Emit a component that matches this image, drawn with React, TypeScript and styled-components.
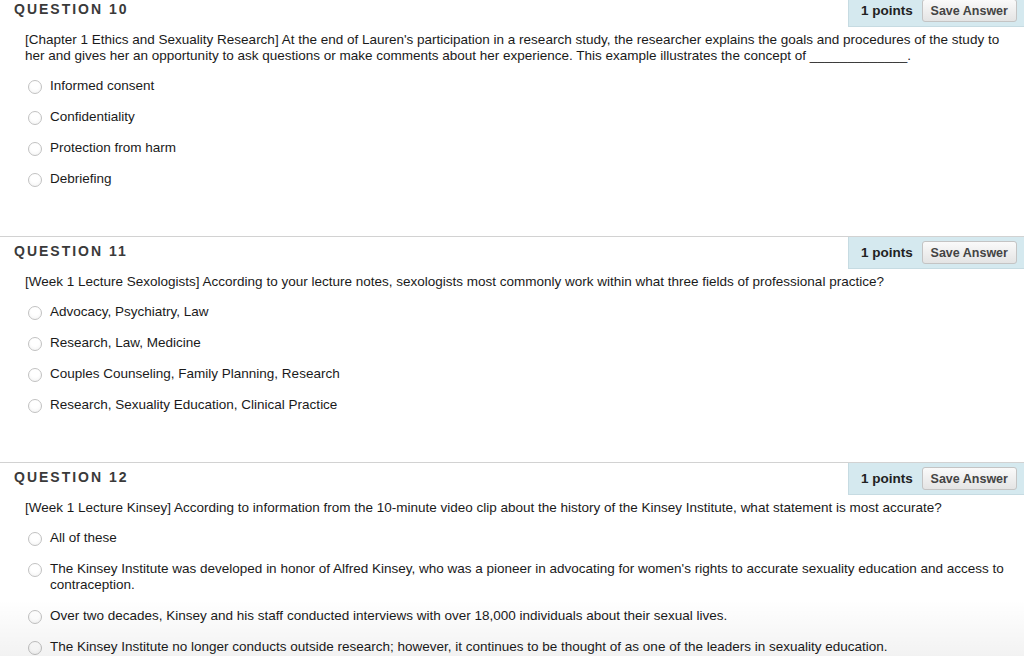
import React from "react";
import styled, { createGlobalStyle } from "styled-components";

const GlobalStyle = createGlobalStyle`
  html, body {
    margin: 0;
    padding: 0;
    background: #fff;
    font-family: "Liberation Sans", Arial, Helvetica, sans-serif;
    overflow: hidden;
  }
`;

const Page = styled.div`
  width: 1024px;
  height: 656px;
  overflow: hidden;
  position: relative;
`;

const List = styled.div`
  margin-top: -6px;
`;

const Section = styled.section`
  border-top: 1px solid #d2d2d2;
  padding-bottom: 49px;
`;

const Header = styled.div`
  display: flex;
  justify-content: space-between;
  align-items: flex-start;
  height: 32px;
`;

const Heading = styled.h3`
  margin: 0 0 0 14px;
  font-size: 14px;
  line-height: 28px;
  font-weight: bold;
  letter-spacing: 2px;
  color: #3a3a3a;
`;

const PointsBox = styled.div`
  flex: none;
  display: flex;
  align-items: center;
  height: 32px;
  width: 176px;
  box-sizing: border-box;
  padding: 0 8px 0 12px;
  background: #d5e9ef;
  border-left: 1px solid #c6dbe2;
  border-bottom: 1px solid #c6dbe2;
  white-space: nowrap;
`;

const Points = styled.span`
  font-size: 13.5px;
  font-weight: bold;
  color: #222;
  margin-right: 9px;
`;

const SaveButton = styled.button`
  flex: none;
  width: 95px;
  height: 23px;
  padding: 0;
  font-family: inherit;
  font-size: 12.5px;
  font-weight: bold;
  color: #444;
  border: 1px solid #c4c4c4;
  border-radius: 3px;
  background: linear-gradient(#fafafa, #e4e4e4);
`;

const Prompt = styled.p`
  margin: 5px 20px 0 25px;
  font-size: 13.5px;
  line-height: 16px;
  color: #1a1a1a;
`;

const Options = styled.div`
  display: flex;
  flex-direction: column;
  gap: 15px;
  margin-top: 14px;
`;

const Option = styled.label`
  display: flex;
  align-items: flex-start;
  padding: 0 16px 0 28px;
  font-size: 13.5px;
  line-height: 16px;
  color: #1a1a1a;
`;

const Radio = styled.span`
  flex: none;
  width: 14px;
  height: 14px;
  margin-top: 2px;
  margin-right: 8px;
  border-radius: 50%;
  box-sizing: border-box;
  border: 1px solid #c2c2c2;
  background: radial-gradient(circle at 50% 35%, #ffffff 40%, #f1f1f1 100%);
`;

const BottomFade = styled.div`
  position: absolute;
  left: 0;
  right: 0;
  bottom: 0;
  height: 56px;
  pointer-events: none;
  background: linear-gradient(rgba(0, 0, 0, 0), rgba(0, 0, 0, 0.05));
`;

type Question = {
  num: number;
  prompt: React.ReactNode;
  options: string[];
};

const questions: Question[] = [
  {
    num: 10,
    prompt: (
      <>
        [Chapter 1 Ethics and Sexuality Research] At the end of Lauren's participation in a research study, the
        researcher explains the goals and procedures of the study to her and gives her an opportunity to ask
        questions or make comments about her experience. This example illustrates the concept of
        _____________.
      </>
    ),
    options: ["Informed consent", "Confidentiality", "Protection from harm", "Debriefing"],
  },
  {
    num: 11,
    prompt:
      "[Week 1 Lecture Sexologists] According to your lecture notes, sexologists most commonly work within what three fields of professional practice?",
    options: [
      "Advocacy, Psychiatry, Law",
      "Research, Law, Medicine",
      "Couples Counseling, Family Planning, Research",
      "Research, Sexuality Education, Clinical Practice",
    ],
  },
  {
    num: 12,
    prompt:
      "[Week 1 Lecture Kinsey] According to information from the 10-minute video clip about the history of the Kinsey Institute, what statement is most accurate?",
    options: [
      "All of these",
      "The Kinsey Institute was developed in honor of Alfred Kinsey, who was a pioneer in advocating for women's rights to accurate sexuality education and access to contraception.",
      "Over two decades, Kinsey and his staff conducted interviews with over 18,000 individuals about their sexual lives.",
      "The Kinsey Institute no longer conducts outside research; however, it continues to be thought of as one of the leaders in sexuality education.",
    ],
  },
];

const QuestionBlock: React.FC<{ q: Question }> = ({ q }) => (
  <Section>
    <Header>
      <Heading>QUESTION {q.num}</Heading>
      <PointsBox>
        <Points>1 points</Points>
        <SaveButton>Save Answer</SaveButton>
      </PointsBox>
    </Header>
    <Prompt>{q.prompt}</Prompt>
    <Options>
      {q.options.map((o) => (
        <Option key={o}>
          <Radio />
          <span>{o}</span>
        </Option>
      ))}
    </Options>
  </Section>
);

export default function App() {
  return (
    <Page>
      <GlobalStyle />
      <List>
        {questions.map((q) => (
          <QuestionBlock key={q.num} q={q} />
        ))}
      </List>
      <BottomFade />
    </Page>
  );
}
